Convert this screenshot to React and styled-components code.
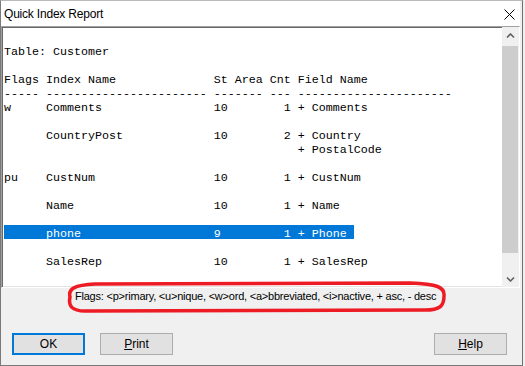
import React from "react";
import styled, { createGlobalStyle } from "styled-components";

const GlobalStyle = createGlobalStyle`
  html, body {
    margin: 0;
    padding: 0;
    background: #f0f0f0;
  }
`;

const fmt = (flag, name, area, cnt, field) =>
  flag.padEnd(6) + name.padEnd(24) + area.padEnd(8) + cnt.padStart(3) + " + " + field;

const lines = [
  { text: "" },
  { text: "Table: Customer" },
  { text: "" },
  { text: "Flags".padEnd(6) + "Index Name".padEnd(24) + "St Area Cnt Field Name" },
  {
    text:
      "----- " + "-".repeat(23) + " ------- --- " + "-".repeat(22),
  },
  { text: fmt("w", "Comments", "10", "1", "Comments") },
  { text: "" },
  { text: fmt("", "CountryPost", "10", "2", "Country") },
  { text: " ".repeat(42) + "+ PostalCode" },
  { text: "" },
  { text: fmt("pu", "CustNum", "10", "1", "CustNum") },
  { text: "" },
  { text: fmt("", "Name", "10", "1", "Name") },
  { text: "" },
  { text: fmt("", "phone", "9", "1", "Phone").padEnd(50), selected: true },
  { text: "" },
  { text: fmt("", "SalesRep", "10", "1", "SalesRep") },
  { text: "" },
  { text: "" },
];

function Chevron({ down }) {
  return (
    <svg width="9" height="6" viewBox="0 0 9 6">
      <path
        d={down ? "M1 1.5 L4.5 5 L8 1.5" : "M1 4.5 L4.5 1 L8 4.5"}
        fill="none"
        stroke="#606060"
        strokeWidth="1.6"
      />
    </svg>
  );
}

export default function App() {
  return (
    <>
      <GlobalStyle />
      <Window>
        <TitleBar>
          <Title>Quick Index Report</Title>
          <Close>
            <svg width="11" height="11" viewBox="0 0 11 11">
              <path d="M0.5 0.5 L10.5 10.5 M10.5 0.5 L0.5 10.5" stroke="#000" strokeWidth="1" />
            </svg>
          </Close>
        </TitleBar>
        <Body>
          <Report>
            <Content>
              {lines.map((l, i) => (
                <Line key={i}>
                  {l.selected ? <Selected>{l.text}</Selected> : l.text}
                </Line>
              ))}
            </Content>
            <ScrollBar>
              <ArrowButton>
                <Chevron />
              </ArrowButton>
              <Track>
                <Thumb />
              </Track>
              <ArrowButton>
                <Chevron down />
              </ArrowButton>
            </ScrollBar>
          </Report>
          <Legend>
            Flags: &lt;p&gt;rimary, &lt;u&gt;nique, &lt;w&gt;ord, &lt;a&gt;bbreviated,
            &lt;i&gt;nactive, + asc, - desc
          </Legend>
          <ButtonRow>
            <Button $default>OK</Button>
            <Button>
              <u>P</u>rint
            </Button>
            <Button $right>
              <u>H</u>elp
            </Button>
          </ButtonRow>
        </Body>
        <Annotation viewBox="0 0 525 366" width="525" height="366">
          <path
            d="M70 297 C68 289, 74 285, 95 284 L410 283 C437 284, 445 287, 444 296 C444 306, 440 310, 425 310 L85 311 C72 311, 68 306, 70 297 Z"
            fill="none"
            stroke="#ed1c24"
            strokeWidth="3.5"
            strokeLinejoin="round"
          />
        </Annotation>
      </Window>
    </>
  );
}

const Window = styled.div`
  position: relative;
  width: 523px;
  height: 366px;
  box-sizing: border-box;
  border-left: 1px solid #7a7a7a;
  border-right: 1px solid #6f6f6f;
  border-bottom: 1px solid #7a7a7a;
  border-top: 1px solid #b9b9b9;
  padding-right: 2px;
  background: #f0f0f0;
  display: flex;
  flex-direction: column;
  font-family: "Liberation Sans", Arial, sans-serif;
`;

const TitleBar = styled.div`
  height: 25px;
  flex: none;
  background: #fff;
  display: flex;
  align-items: center;
  justify-content: space-between;
  padding: 0 5px 0 3px;
`;

const Title = styled.div`
  font-size: 12px;
  letter-spacing: -0.2px;
  color: #000;
`;

const Close = styled.div`
  display: flex;
  align-items: center;
  margin-top: 1px;
`;

const Body = styled.div`
  flex: 1;
  display: flex;
  flex-direction: column;
`;

const Report = styled.div`
  height: 262px;
  flex: none;
  box-sizing: border-box;
  display: flex;
  background: #fff;
  border: 1px solid;
  border-color: #a0a0a0 #fff #fff #a0a0a0;
  box-shadow: inset 1px 1px #696969, inset -1px -1px #e3e3e3;
  overflow: hidden;
`;

const Content = styled.div`
  flex: 1;
  padding: 2px 0 0 2px;
  overflow: hidden;
  font-family: "Liberation Mono", "Courier New", monospace;
  font-size: 11.67px;
  color: #000;
`;

const Line = styled.div`
  height: 14px;
  line-height: 18px;
  white-space: pre;
`;

const Selected = styled.span`
  display: inline-block;
  vertical-align: top;
  height: 14px;
  background: #0078d7;
  color: #fff;
`;

const ScrollBar = styled.div`
  width: 17px;
  flex: none;
  display: flex;
  flex-direction: column;
  background: #f0f0f0;
`;

const ArrowButton = styled.div`
  height: 17px;
  flex: none;
  display: flex;
  align-items: center;
  justify-content: center;
`;

const Track = styled.div`
  flex: 1;
  padding: 2px 1px 0 0;
`;

const Thumb = styled.div`
  height: 207px;
  background: #cdcdcd;
`;

const Legend = styled.div`
  margin-top: 1px;
  padding-left: 74px;
  font-size: 11px;
  letter-spacing: -0.22px;
  line-height: 14px;
  color: #000;
  white-space: nowrap;
`;

const ButtonRow = styled.div`
  margin-top: auto;
  display: flex;
  gap: 15px;
  padding: 0 13px 10px 11px;
`;

const Button = styled.div`
  width: 73px;
  height: 22px;
  box-sizing: border-box;
  display: flex;
  align-items: center;
  justify-content: center;
  background: #e1e1e1;
  border: ${(p) => (p.$default ? "2px solid #0078d7" : "1px solid #adadad")};
  font-size: 12px;
  color: #000;
  margin-left: ${(p) => (p.$right ? "auto" : "0")};
`;

const Annotation = styled.svg`
  position: absolute;
  left: -1px;
  top: -1px;
  pointer-events: none;
`;
